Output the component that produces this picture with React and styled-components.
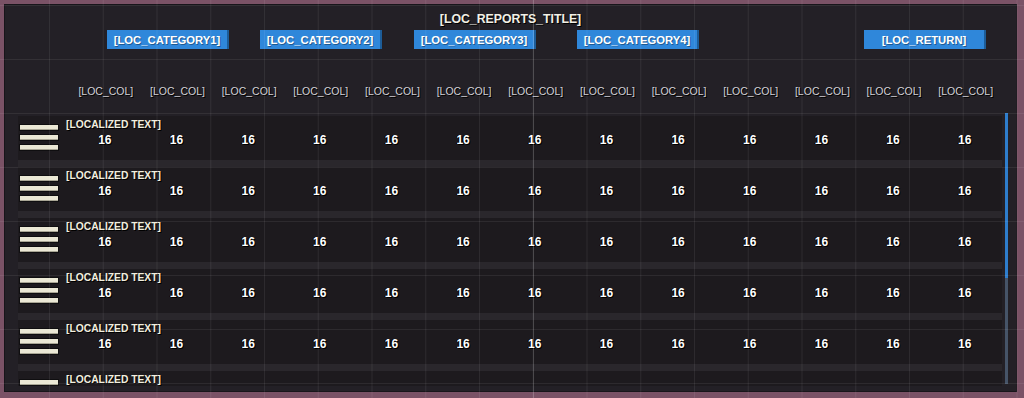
import React from "react";
import styled, { createGlobalStyle } from "styled-components";

const GlobalStyle = createGlobalStyle`
  html, body {
    margin: 0;
    padding: 0;
    background: #7a5266;
  }
  * {
    box-sizing: border-box;
  }
`;

const Frame = styled.div`
  position: relative;
  width: 1024px;
  height: 398px;
  padding: 4px 7px 6px 4px;
  font-family: "Liberation Sans", Arial, sans-serif;
`;

const GridOverlay = styled.div`
  position: absolute;
  inset: 0;
  pointer-events: none;
  background-image:
    linear-gradient(to right, transparent 533px, rgba(255, 255, 255, 0.16) 533px, rgba(255, 255, 255, 0.16) 534px, transparent 534px),
    linear-gradient(to right, rgba(255, 255, 255, 0.07) 1px, transparent 1px),
    linear-gradient(to bottom, rgba(255, 255, 255, 0.07) 1px, transparent 1px);
  background-size: 100% 100%, 53.76px 54px, 53.76px 54px;
  background-position: 0 0, 49px 5px, 49px 5px;
  background-repeat: no-repeat, repeat, repeat;
`;

const Panel = styled.div`
  height: 100%;
  background: #232026;
  border: 1px solid #17151a;
  display: flex;
  flex-direction: column;
  overflow: hidden;
`;

const Title = styled.div`
  padding-top: 7px;
  margin-bottom: 4px;
  line-height: 14px;
  text-align: center;
  font-size: 12.3px;
  font-weight: bold;
  color: #f2f0e6;
  text-shadow: 1px 1px 0 #000;
`;

const ButtonRow = styled.div`
  display: flex;
  gap: 31px;
  padding-left: 102px;
  height: 19px;
`;

const TabButton = styled.button`
  width: 122px;
  height: 19px;
  margin-left: ${(p) => p.$offset || 0}px;
  padding: 0;
  border: none;
  border-right: 2px solid #1d5d99;
  background: #2f87da;
  color: #ffffff;
  font-family: inherit;
  font-size: 11.3px;
  font-weight: bold;
  text-shadow: 1px 1px 0 rgba(0, 0, 0, 0.35);
`;

const ColumnHeader = styled.div`
  display: grid;
  grid-template-columns: repeat(13, 71.67px);
  align-items: end;
  height: 64px;
  padding-left: 65px;
  padding-bottom: 15px;
`;

const ColLabel = styled.div`
  text-align: center;
  line-height: 14px;
  font-size: 10.5px;
  color: #d2d0d6;
  text-shadow: 1px 1px 0 #000;
`;

const Body = styled.div`
  display: flex;
  align-items: flex-start;
  height: 273px;
`;

const List = styled.div`
  margin-left: 13px;
  width: 984px;
  height: 273px;
  padding-top: 3px;
  overflow: hidden;
`;

const Row = styled.div`
  display: flex;
  height: 44px;
  margin-bottom: 7px;
  background: #1d1a1e;
  box-shadow: 0 7px 0 #2a272c;
`;

const IconCell = styled.div`
  width: 48px;
  padding: 9px 0 0 2px;
  display: flex;
  flex-direction: column;
  gap: 5px;
`;

const Bar = styled.div`
  width: 38px;
  height: 5px;
  background: #ebe8d5;
  border-bottom: 1px solid #a8a594;
  box-shadow: 0 0 0 1px rgba(0, 0, 0, 0.45);
`;

const Content = styled.div`
  display: flex;
  flex-direction: column;
`;

const RowLabel = styled.div`
  margin-top: 3px;
  line-height: 12px;
  font-size: 10.3px;
  font-weight: bold;
  color: #f1eedf;
  text-shadow: 1px 1px 0 #000;
`;

const Numbers = styled.div`
  display: grid;
  grid-template-columns: repeat(13, 71.67px);
  margin-left: 3px;
  margin-top: 1px;
  line-height: 16px;
`;

const Num = styled.div`
  text-align: center;
  font-size: 12px;
  font-weight: bold;
  color: #ffffff;
  text-shadow: 1px 1px 0 #000, -1px 0 0 #000;
`;

const Scrollbar = styled.div`
  margin-left: 3px;
  width: 3px;
  height: 271px;
  background: #465468;
  display: flex;
  flex-direction: column;
`;

const Thumb = styled.div`
  width: 100%;
  background: #2e7dcc;
`;

const categories = [
  { label: "[LOC_CATEGORY1]", offset: 0 },
  { label: "[LOC_CATEGORY2]", offset: 0 },
  { label: "[LOC_CATEGORY3]", offset: 1 },
  { label: "[LOC_CATEGORY4]", offset: 10 },
  { label: "[LOC_RETURN]", offset: 134 },
];

const columns = Array.from({ length: 13 }, () => "[LOC_COL]");
const rows = Array.from({ length: 6 }, () => ({
  label: "[LOCALIZED TEXT]",
  values: Array.from({ length: 13 }, () => 16),
}));

const App = () => {
  return (
    <>
      <GlobalStyle />
      <Frame>
        <Panel>
          <Title>[LOC_REPORTS_TITLE]</Title>
          <ButtonRow>
            {categories.map((c) => (
              <TabButton key={c.label} $offset={c.offset}>
                {c.label}
              </TabButton>
            ))}
          </ButtonRow>
          <ColumnHeader>
            {columns.map((c, i) => (
              <ColLabel key={i}>{c}</ColLabel>
            ))}
          </ColumnHeader>
          <Body>
            <List>
              {rows.map((r, i) => (
                <Row key={i}>
                  <IconCell>
                    <Bar />
                    <Bar />
                    <Bar />
                  </IconCell>
                  <Content>
                    <RowLabel>{r.label}</RowLabel>
                    <Numbers>
                      {r.values.map((v, j) => (
                        <Num key={j}>{v}</Num>
                      ))}
                    </Numbers>
                  </Content>
                </Row>
              ))}
            </List>
            <Scrollbar>
              <Thumb style={{ height: `${(165 / 271) * 100}%` }} />
            </Scrollbar>
          </Body>
        </Panel>
        <GridOverlay />
      </Frame>
    </>
  );
};

export default App;
